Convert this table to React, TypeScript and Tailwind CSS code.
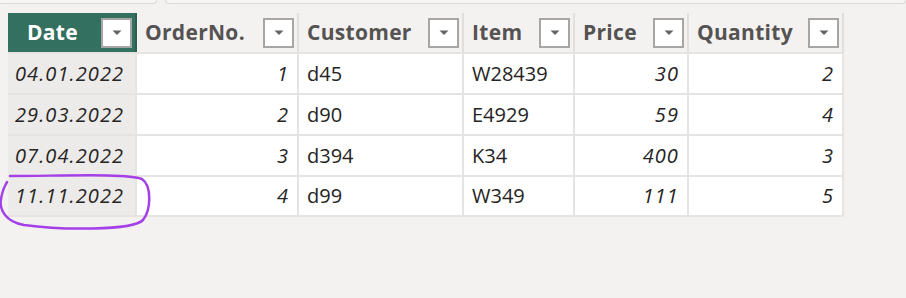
import React from "react";

const cols = [
  { name: "Date", w: 129, align: "left" },
  { name: "OrderNo.", w: 162, align: "right" },
  { name: "Customer", w: 165, align: "left" },
  { name: "Item", w: 111, align: "left" },
  { name: "Price", w: 114, align: "right" },
  { name: "Quantity", w: 155, align: "right" },
];

const rows = [
  ["04.01.2022", "1", "d45", "W28439", "30", "2"],
  ["29.03.2022", "2", "d90", "E4929", "59", "4"],
  ["07.04.2022", "3", "d394", "K34", "400", "3"],
  ["11.11.2022", "4", "d99", "W349", "111", "5"],
];

function Drop() {
  return (
    <div className="w-[31px] h-[30px] border-2 border-[#a8a6a4] bg-white flex items-center justify-center shrink-0">
      <svg width="10" height="6" viewBox="0 0 10 6">
        <path d="M0.5 0.5 L9.5 0.5 L5 5 Z" fill="#666462" />
      </svg>
    </div>
  );
}

export default function App() {
  const font = { fontFamily: '"Open Sans", "Noto Sans", sans-serif' };
  return (
    <div className="w-[906px] h-[298px] bg-[#f3f2f1] relative overflow-hidden" style={font}>
      <div className="flex h-[4px]">
        <div className="ml-[-2px] w-[163px] h-[4px] border-x border-b border-[#dcdad8] rounded-b-[4px] bg-[#f6f5f4]" />
        <div className="ml-[8px] w-[760px] h-[4px] border-x border-b border-[#dcdad8] rounded-b-[4px] bg-[#f6f5f4]" />
      </div>
      <div className="ml-[8px] mt-[9px] w-max">
        <div className="flex h-[41px] border-b-2 border-[#e6e4e2]">
          {cols.map((c, i) => (
            <div
              key={c.name}
              style={{ width: c.w }}
              className={
                i === 0
                  ? "h-full bg-[#33705f] border-r-2 border-[#2a5f50] flex items-center pl-[19px] pr-[3px] justify-between"
                  : "h-full border-r-2 border-[#e1dfdd] flex items-center pl-[8px] pr-[3px] justify-between"
              }
            >
              <span
                className={
                  i === 0
                    ? "text-white font-bold text-[21px] tracking-[0.3px] pt-[1px]"
                    : "text-[#555352] font-bold text-[21px] tracking-[0.3px] pt-[1px]"
                }
              >
                {c.name}
              </span>
              <Drop />
            </div>
          ))}
        </div>
        {rows.map((r, ri) => (
          <div key={ri} className={"flex border-b-2 border-[#e6e4e2] " + (ri === 3 ? "h-[40px]" : "h-[41px]")}>
            {r.map((v, ci) => (
              <div
                key={ci}
                style={{ width: cols[ci].w }}
                className={
                  "h-full border-r-2 border-[#e6e4e2] flex items-center text-[20px] text-[#252423] " +
                  (ci === 0
                    ? "bg-[#edebe9] pl-[7px] italic tracking-[1.1px]"
                    : cols[ci].align === "right"
                    ? "bg-white justify-end pr-[8px] italic tracking-[1.1px]"
                    : "bg-white pl-[8px]")
                }
              >
                {v}
              </div>
            ))}
          </div>
        ))}
      </div>
      <svg className="absolute left-0 top-0 pointer-events-none" width="906" height="298">
        <path
          d="M10 176 C 60 176, 128 173, 142 179 C 152 186, 151 210, 143 220 C 132 231, 60 230, 24 225 C 6 222, -1 210, 1 199 C 2 192, 4 187, 7 182"
          fill="none"
          stroke="#a53fe8"
          strokeWidth="2.5"
          strokeLinecap="round"
        />
      </svg>
    </div>
  );
}
